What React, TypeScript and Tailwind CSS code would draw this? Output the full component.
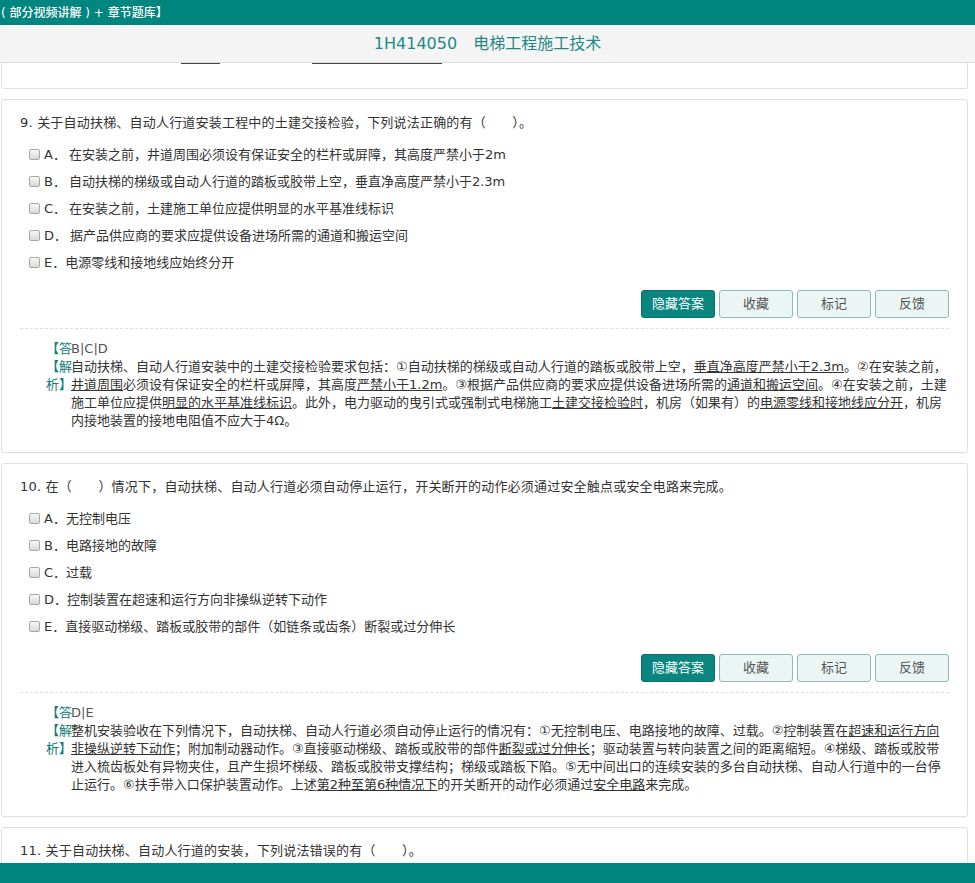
import type { ReactNode } from "react";

const FONT = "font-['DejaVu_Sans','Noto_Sans_CJK_SC',sans-serif]";

type Option = { key: string; text: string; gap?: boolean };

const Checkbox = () => (
  <span className="inline-block w-[11px] h-[11px] shrink-0 rounded-[2px] border border-[#a8a8a8] bg-linear-to-b from-[#f7f7f7] to-[#d9d9d9]" />
);

const ActionButtons = () => (
  <div className="flex justify-end gap-[4px]">
    <button className="w-[74px] h-[28px] rounded-[3px] border border-[#0a6f6b] bg-[#0a857f] text-white text-[13px]">
      隐藏答案
    </button>
    {["收藏", "标记", "反馈"].map((t) => (
      <button
        key={t}
        className="w-[74px] h-[28px] rounded-[3px] border border-[#8cbcb8] bg-[#eaf5f4] text-[#555] text-[13px]"
      >
        {t}
      </button>
    ))}
  </div>
);

const QuestionCard = ({
  title,
  options,
  answer,
  analysis,
}: {
  title: string;
  options: Option[];
  answer: string;
  analysis: ReactNode;
}) => (
  <div className="rounded-[3px] border border-[#e0e0e0] bg-white px-[18px] pt-[14px] pb-[22px] shadow-[0_1px_2px_rgba(0,0,0,0.04)]">
    <div className="leading-[18px] text-[#333] tracking-[0.2px]">{title}</div>

    {/* options */}
    <div className="mt-[9px]">
      {options.map((o) => (
        <div key={o.key} className="flex items-center h-[27px] pl-[9px] text-[#333]">
          <Checkbox />
          <span className="ml-[4px]">{o.key}．</span>
          <span className={o.gap === false ? "" : "ml-[3px]"}>{o.text}</span>
        </div>
      ))}
    </div>

    <div className="mt-[14px]">
      <ActionButtons />
    </div>

    <div className="mt-[10px] border-t border-dashed border-[#dedede]" />

    {/* answer + analysis */}
    <div className="mt-[11px] pl-[26px] leading-[18px]">
      <div className="flex">
        <span className="w-[25px] shrink-0 text-[#0d7c77]">【答</span>
        <span className="text-[#555]">{answer}</span>
      </div>
      <div className="flex">
        <span className="w-[25px] shrink-0 text-[#0d7c77]">
          【解
          <br />
          析】
        </span>
        <div className="text-[#333] whitespace-nowrap">{analysis}</div>
      </div>
    </div>
  </div>
);

export default function App() {
  return (
    <div className={`${FONT} h-[883px] flex flex-col overflow-hidden bg-white text-[13px]`}>
      {/* top bar */}
      <div className="h-[25px] shrink-0 bg-[#00857f] flex items-center px-[1px] text-white text-[12px] font-medium">
        ( 部分视频讲解 ) + 章节题库】
      </div>

      {/* title bar */}
      <div className="h-[38px] shrink-0 bg-[#f4f4f4] border-b border-[#dcdcdc] flex items-center justify-center text-[16px] text-[#1f8a85]">
        1H414050　电梯工程施工技术
      </div>

      <div className="flex-1 overflow-hidden ml-[1px] mr-[7px] flex flex-col gap-[10px]">
        {/* tail of previous card */}
        <div className="h-[26px] shrink-0 rounded-b-[3px] border border-t-0 border-[#e0e0e0] bg-white">
          <div className="flex h-[1px]">
            <div className="ml-[179px] w-[39px] bg-[#444]" />
            <div className="ml-[92px] w-[130px] bg-[#444]" />
          </div>
        </div>

        <QuestionCard
          title="9. 关于自动扶梯、自动人行道安装工程中的土建交接检验，下列说法正确的有（　　）。"
          options={[
            { key: "A", text: "在安装之前，井道周围必须设有保证安全的栏杆或屏障，其高度严禁小于2m" },
            { key: "B", text: "自动扶梯的梯级或自动人行道的踏板或胶带上空，垂直净高度严禁小于2.3m" },
            { key: "C", text: "在安装之前，土建施工单位应提供明显的水平基准线标识" },
            { key: "D", text: "据产品供应商的要求应提供设备进场所需的通道和搬运空间" },
            { key: "E", text: "电源零线和接地线应始终分开", gap: false },
          ]}
          answer="B|C|D"
          analysis={
            <>
              自动扶梯、自动人行道安装中的土建交接检验要求包括：①自动扶梯的梯级或自动人行道的踏板或胶带上空，<u>垂直净高度严禁小于2.3m</u>。②在安装之前，
              <br />
              <u>井道周围</u>必须设有保证安全的栏杆或屏障，其高度<u>严禁小于1.2m</u>。③根据产品供应商的要求应提供设备进场所需的<u>通道和搬运空间</u>。④在安装之前，土建
              <br />
              施工单位应提供<u>明显的水平基准线标识</u>。此外，电力驱动的曳引式或强制式电梯施工<u>土建交接检验时</u>，机房（如果有）的<u>电源零线和接地线应分开</u>，机房
              <br />
              内接地装置的接地电阻值不应大于4Ω。
            </>
          }
        />

        <QuestionCard
          title="10. 在（　　）情况下，自动扶梯、自动人行道必须自动停止运行，开关断开的动作必须通过安全触点或安全电路来完成。"
          options={[
            { key: "A", text: "无控制电压", gap: false },
            { key: "B", text: "电路接地的故障", gap: false },
            { key: "C", text: "过载", gap: false },
            { key: "D", text: "控制装置在超速和运行方向非操纵逆转下动作", gap: false },
            { key: "E", text: "直接驱动梯级、踏板或胶带的部件（如链条或齿条）断裂或过分伸长", gap: false },
          ]}
          answer="D|E"
          analysis={
            <>
              整机安装验收在下列情况下，自动扶梯、自动人行道必须自动停止运行的情况有：①无控制电压、电路接地的故障、过载。②控制装置在<u>超速和运行方向</u>
              <br />
              <u>非操纵逆转下动作</u>；附加制动器动作。③直接驱动梯级、踏板或胶带的部件<u>断裂或过分伸长</u>；驱动装置与转向装置之间的距离缩短。④梯级、踏板或胶带
              <br />
              进入梳齿板处有异物夹住，且产生损坏梯级、踏板或胶带支撑结构；梯级或踏板下陷。⑤无中间出口的连续安装的多台自动扶梯、自动人行道中的一台停
              <br />
              止运行。⑥扶手带入口保护装置动作。上述<u>第2种至第6种情况下</u>的开关断开的动作必须通过<u>安全电路</u>来完成。
            </>
          }
        />

        <div className="shrink-0 rounded-[3px] border border-[#e0e0e0] bg-white px-[18px] pt-[14px] h-[80px]">
          <div className="leading-[18px] text-[#333] tracking-[0.2px]">
            11. 关于自动扶梯、自动人行道的安装，下列说法错误的有（　　）。
          </div>
        </div>
      </div>

      {/* bottom bar */}
      <div className="h-[20px] shrink-0 bg-[#00857f]" />
    </div>
  );
}
